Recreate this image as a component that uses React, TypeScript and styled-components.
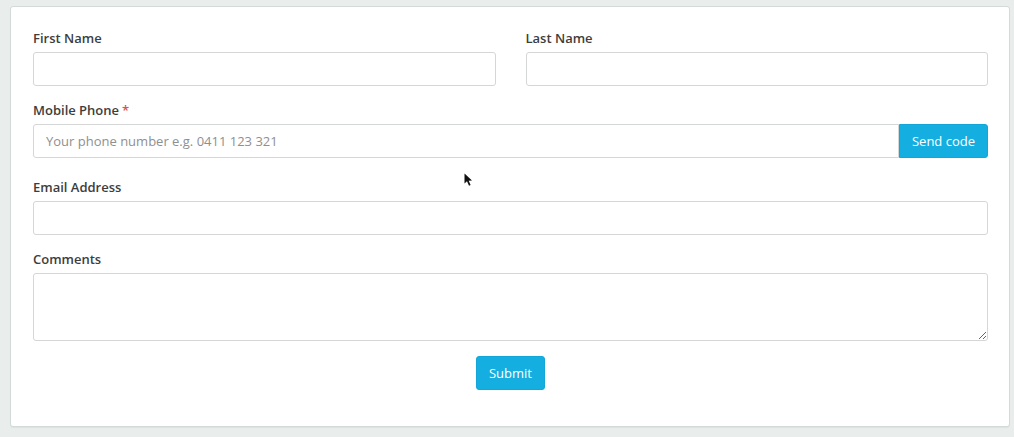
import React from "react";
import styled, { createGlobalStyle } from "styled-components";

const GlobalStyle = createGlobalStyle`
  html, body {
    margin: 0;
    padding: 0;
    background: #e9eeec;
    font-family: "Open Sans", "Liberation Sans", sans-serif;
  }
  * {
    box-sizing: border-box;
  }
`;

const Page = styled.div`
  position: relative;
  padding: 6px 0 9px 10px;
  min-height: 437px;
`;

const Card = styled.form`
  width: 1000px;
  background: #ffffff;
  border: 1px solid #d2dbd8;
  border-radius: 3px;
  box-shadow: 0 1px 1px rgba(0, 0, 0, 0.05);
  padding: 21px 21px 36px 22px;
`;

const Row = styled.div`
  display: grid;
  grid-template-columns: 1fr 1fr;
  column-gap: 30px;
`;

const Group = styled.div<{ $gap?: number }>`
  margin-bottom: ${(p) => p.$gap ?? 14}px;
`;

const Label = styled.label`
  display: block;
  font-size: 13px;
  font-weight: 600;
  line-height: 20px;
  color: #3d3d3d;
  margin-bottom: 4px;
`;

const Required = styled.span`
  color: #d9534f;
  margin-left: 3px;
`;

const Input = styled.input`
  display: block;
  width: 100%;
  height: 34px;
  padding: 6px 12px;
  font-family: inherit;
  font-size: 13px;
  color: #555;
  background: #fff;
  border: 1px solid #d4d7d6;
  border-radius: 3px;
  outline: none;

  &::placeholder {
    color: #8f8f8f;
  }
`;

const InputGroup = styled.div`
  display: flex;
`;

const GroupedInput = styled(Input)`
  flex: 1;
  border-radius: 3px 0 0 3px;
`;

const Button = styled.button`
  height: 34px;
  padding: 0 10px;
  font-family: inherit;
  font-size: 13px;
  font-weight: 500;
  white-space: nowrap;
  color: #ffffff;
  background: #15aee0;
  border: 1px solid #12a7d8;
  border-radius: 3px;
  cursor: pointer;
`;

const AddonButton = styled(Button)`
  width: 89px;
  flex-shrink: 0;
  border-radius: 0 3px 3px 0;
`;

const TextArea = styled.textarea`
  display: block;
  width: 100%;
  height: 68px;
  padding: 6px 12px;
  font-family: inherit;
  font-size: 13px;
  border: 1px solid #d4d7d6;
  border-radius: 3px;
  resize: vertical;
  outline: none;
`;

const Actions = styled.div`
  display: flex;
  justify-content: center;
`;

const SubmitButton = styled(Button)`
  width: 69px;
`;

const Pointer = styled.svg`
  position: absolute;
  left: 464px;
  top: 173px;
  pointer-events: none;
`;

const App: React.FC = () => {
  return (
    <>
      <GlobalStyle />
      <Page>
        <Card onSubmit={(e) => e.preventDefault()}>
          {/* Name fields */}
          <Row>
            <Group>
              <Label>First Name</Label>
              <Input type="text" />
            </Group>
            <Group>
              <Label>Last Name</Label>
              <Input type="text" />
            </Group>
          </Row>

          {/* Phone with verification */}
          <Group $gap={19}>
            <Label>
              Mobile Phone<Required>*</Required>
            </Label>
            <InputGroup>
              <GroupedInput type="tel" placeholder="Your phone number e.g. 0411 123 321" />
              <AddonButton type="button">Send code</AddonButton>
            </InputGroup>
          </Group>

          <Group>
            <Label>Email Address</Label>
            <Input type="email" />
          </Group>

          <Group $gap={15}>
            <Label>Comments</Label>
            <TextArea />
          </Group>

          <Actions>
            <SubmitButton type="submit">Submit</SubmitButton>
          </Actions>
        </Card>

        {/* mouse pointer */}
        <Pointer width="9" height="14" viewBox="0 0 9 14">
          <path d="M0.5 0.5 L0.5 10.5 L3 8.3 L5 12.8 L6.6 12 L4.7 7.7 L8 7.5 Z" fill="#111" />
        </Pointer>
      </Page>
    </>
  );
};

export default App;
